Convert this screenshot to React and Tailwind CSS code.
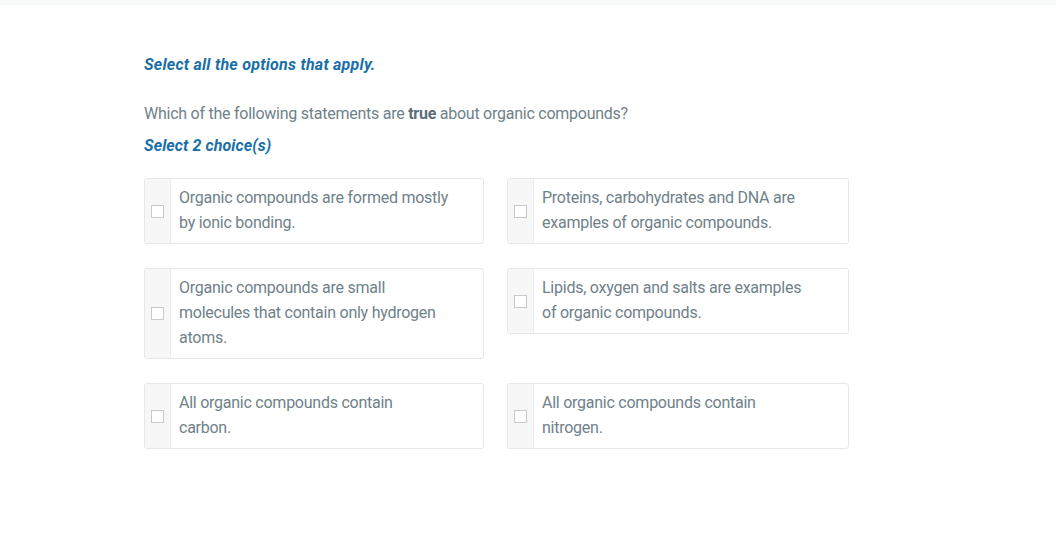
import React from 'react';

const choices = [
  ['Organic compounds are formed mostly', 'by ionic bonding.'],
  ['Proteins, carbohydrates and DNA are', 'examples of organic compounds.'],
  ['Organic compounds are small', 'molecules that contain only hydrogen', 'atoms.'],
  ['Lipids, oxygen and salts are examples', 'of organic compounds.'],
  ['All organic compounds contain', 'carbon.'],
  ['All organic compounds contain', 'nitrogen.'],
];

function Choice({ lines }) {
  return (
    <label className="flex border border-[#e6e8e8] rounded-[3px] bg-white cursor-pointer">
      <div className="w-[26px] shrink-0 bg-[#f7f7f7] border-r border-[#ececec] rounded-l-[3px] flex items-center justify-center">
        <span className="w-[13px] h-[13px] border border-[#c9c9c9] bg-white" />
      </div>
      <div className="pl-[8px] pr-4 pt-[6px] pb-[8px] text-[16px] leading-[25px] tracking-[-0.25px] text-[#6f8189]">
        {lines.map((l, i) => (
          <span key={i} className="block whitespace-nowrap">{l}</span>
        ))}
      </div>
    </label>
  );
}

export default function App() {
  return (
    <div className="min-h-[560px] bg-white" style={{ fontFamily: 'Roboto, "Open Sans", sans-serif' }}>
      <div className="h-[5px] bg-[#f8faf9]" />
      <div className="pl-[144px] pt-[48px]">
        <p className="text-[16px] leading-[24px] font-bold italic tracking-[0.25px] text-[#1a6fa8]">
          Select all the options that apply.
        </p>
        <p className="mt-[25px] text-[16px] leading-[24px] tracking-[-0.25px] text-[#6f8189]">
          Which of the following statements are <strong className="text-[#5d6e76]">true</strong> about organic compounds?
        </p>
        <p className="mt-[8px] text-[16px] leading-[24px] font-bold italic tracking-[0.1px] text-[#1a6fa8]">
          Select 2 choice(s)
        </p>

        <div className="mt-[20px] grid grid-cols-[340px_342px] gap-x-[23px] gap-y-[24px] items-start">
          {choices.map((c, i) => (
            <Choice key={i} lines={c} />
          ))}
        </div>
      </div>
    </div>
  );
}
